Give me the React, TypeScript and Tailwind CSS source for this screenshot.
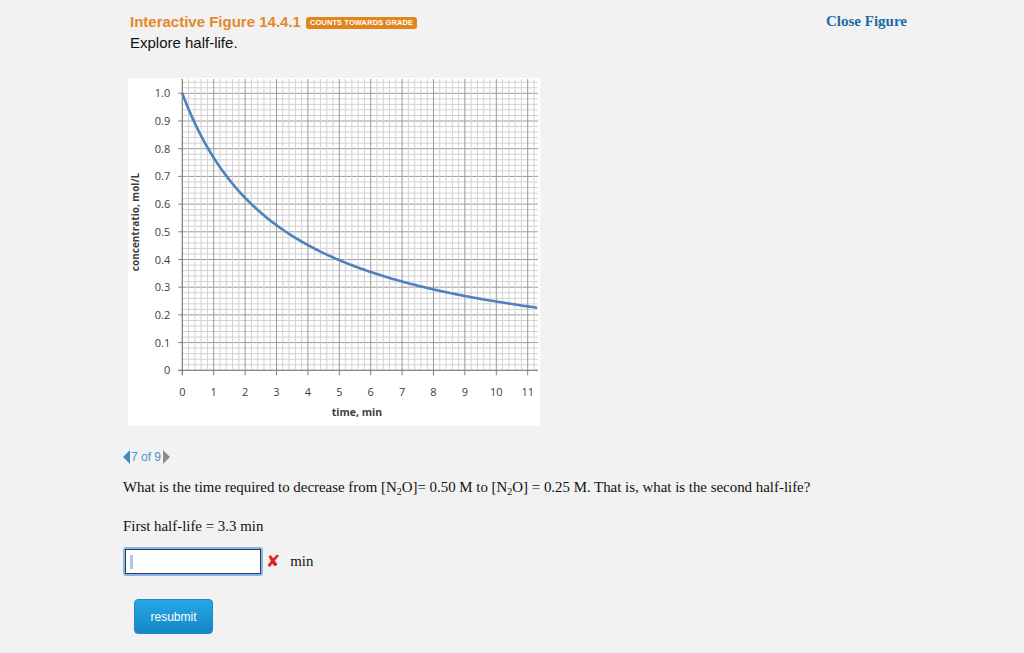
import React from "react";

const X0 = 54.3;
const XU = 31.4;
const Y0 = 292.3;
const YU = 277;

function HalfLifeChart() {
  const right = 410;
  const top = 1;

  // grid lines
  const vLines: { x: number; major: boolean }[] = [];
  for (let i = 0; ; i++) {
    const x = X0 + (i * XU) / 5;
    if (x > right) break;
    vLines.push({ x, major: i % 5 === 0 });
  }
  const hLines: { y: number; major: boolean }[] = [];
  for (let i = 0; ; i++) {
    const y = Y0 - (i * YU) / 50;
    if (y < top) break;
    hLines.push({ y, major: i % 5 === 0 });
  }

  // second order decay: c = 1 / (1 + kt)
  const k = 0.303;
  const pts: string[] = [];
  for (let t = 0; t <= 11.33; t += 0.05) {
    const c = 1 / (1 + k * t);
    pts.push(`${(X0 + t * XU).toFixed(2)},${(Y0 - c * YU).toFixed(2)}`);
  }

  const yLabels = ["0", "0.1", "0.2", "0.3", "0.4", "0.5", "0.6", "0.7", "0.8", "0.9", "1.0"];

  return (
    <svg width="412" height="348" viewBox="0 0 412 348" className="block">
      {hLines.map((l, i) => (
        <line
          key={"h" + i}
          x1={X0}
          x2={right}
          y1={l.y}
          y2={l.y}
          stroke={l.major ? "#9a9a9a" : "#d2d2d2"}
          strokeWidth={1}
        />
      ))}
      {vLines.map((l, i) => (
        <line
          key={"v" + i}
          x1={l.x}
          x2={l.x}
          y1={top}
          y2={Y0}
          stroke={l.major ? "#9a9a9a" : "#d2d2d2"}
          strokeWidth={1}
        />
      ))}
      {/* axes */}
      <line x1={X0} x2={X0} y1={top} y2={Y0 + 5} stroke="#7f7f7f" />
      <line x1={X0 - 4} x2={right} y1={Y0} y2={Y0} stroke="#7f7f7f" />
      {yLabels.map((lab, i) => (
        <g key={lab}>
          <line x1={X0 - 4} x2={X0} y1={Y0 - (i * YU) / 10} y2={Y0 - (i * YU) / 10} stroke="#7f7f7f" />
          <text
            x={X0 - 12}
            y={Y0 - (i * YU) / 10 + 4}
            textAnchor="end"
            fontSize="11"
            fill="#404040"
            fontFamily="'Open Sans', sans-serif"
          >
            {lab}
          </text>
        </g>
      ))}
      {Array.from({ length: 12 }).map((_, i) => (
        <g key={"x" + i}>
          <line x1={X0 + i * XU} x2={X0 + i * XU} y1={Y0} y2={Y0 + 5} stroke="#7f7f7f" />
          <text
            x={X0 + i * XU}
            y={318}
            textAnchor="middle"
            fontSize="11"
            fill="#404040"
            fontFamily="'Open Sans', sans-serif"
          >
            {i}
          </text>
        </g>
      ))}
      <text
        x={229}
        y={338}
        textAnchor="middle"
        fontSize="10.5"
        fontWeight="bold"
        fill="#404040"
        fontFamily="'Open Sans', sans-serif"
      >
        time, min
      </text>
      <text
        transform="translate(11 144) rotate(-90)"
        textAnchor="middle"
        fontSize="10"
        fontWeight="bold"
        fill="#404040"
        fontFamily="'Open Sans', sans-serif"
      >
        concentratio, mol/L
      </text>
      <polyline points={pts.join(" ")} fill="none" stroke="#4f81bd" strokeWidth={2.6} />
    </svg>
  );
}

export default function App() {
  return (
    <div className="min-h-screen w-full bg-[#f2f2f2] font-['Liberation_Sans',Arial,sans-serif]">
      <div className="ml-[123px] w-[784px] pt-[12px]">
        {/* header */}
        <div className="flex items-start justify-between">
          <div className="pl-[7px]">
            <div className="flex items-center gap-[5px]">
              <h1 className="text-[15px] leading-[20px] font-bold text-[#e5882a]">
                Interactive Figure 14.4.1
              </h1>
              <span className="rounded-[3px] bg-[#e0861b] px-[4px] text-[7.5px] leading-[12px] font-bold text-white tracking-[0.1px] mt-[1px]">
                COUNTS TOWARDS GRADE
              </span>
            </div>
            <p className="text-[15px] leading-[22px] text-[#111]">Explore half-life.</p>
          </div>
          <button className="mt-[-2px] font-['Liberation_Serif','Times_New_Roman',serif] text-[15px] font-bold text-[#1f6aa6]">
            Close Figure
          </button>
        </div>

        {/* figure */}
        <div className="mt-[24px] ml-[5px] w-[412px] h-[348px] bg-white">
          <HalfLifeChart />
        </div>

        {/* pager */}
        <div className="mt-[23px] flex items-center text-[12px] leading-[16px] text-[#4a94cf]">
          <span className="inline-block w-0 h-0 border-y-[7px] border-y-transparent border-r-[7px] border-r-[#3a8ccc] mr-[1px]" />
          <span>7 of 9</span>
          <span className="inline-block w-0 h-0 border-y-[7px] border-y-transparent border-l-[7px] border-l-[#8c8c8c] ml-[2px]" />
        </div>

        {/* question */}
        <div className="font-['Liberation_Serif','Times_New_Roman',serif] text-[14.9px] text-[#111]">
          <p className="mt-[13px] leading-[18px]">
            What is the time required to decrease from [N<sub className="text-[10px]">2</sub>O]= 0.50 M to [N
            <sub className="text-[10px]">2</sub>O] = 0.25 M. That is, what is the second half-life?
          </p>
          <p className="mt-[21px] leading-[18px]">First half-life = 3.3 min</p>

          <div className="mt-[12px] flex items-center">
            <div className="rounded-[3px] bg-[#86b6ea] p-[2px]">
              <div className="w-[136px] h-[25px] bg-white border border-[#2f3a4a] flex items-center pl-[4px]">
                <span className="block w-[3px] h-[14px] bg-[#a9c6ee]" />
              </div>
            </div>
            <span className="ml-[3px] text-[17px] leading-none font-bold text-[#e0202a] font-['DejaVu_Sans',sans-serif]">
              ✘
            </span>
            <span className="ml-[10px]">min</span>
          </div>

          <button className="mt-[23px] ml-[11px] w-[79px] h-[35px] rounded-[4px] border border-[#1b8ac8] bg-gradient-to-b from-[#25a8e6] to-[#1686c6] text-white text-[12px] font-['Liberation_Sans',Arial,sans-serif]">
            resubmit
          </button>
        </div>
      </div>
    </div>
  );
}
